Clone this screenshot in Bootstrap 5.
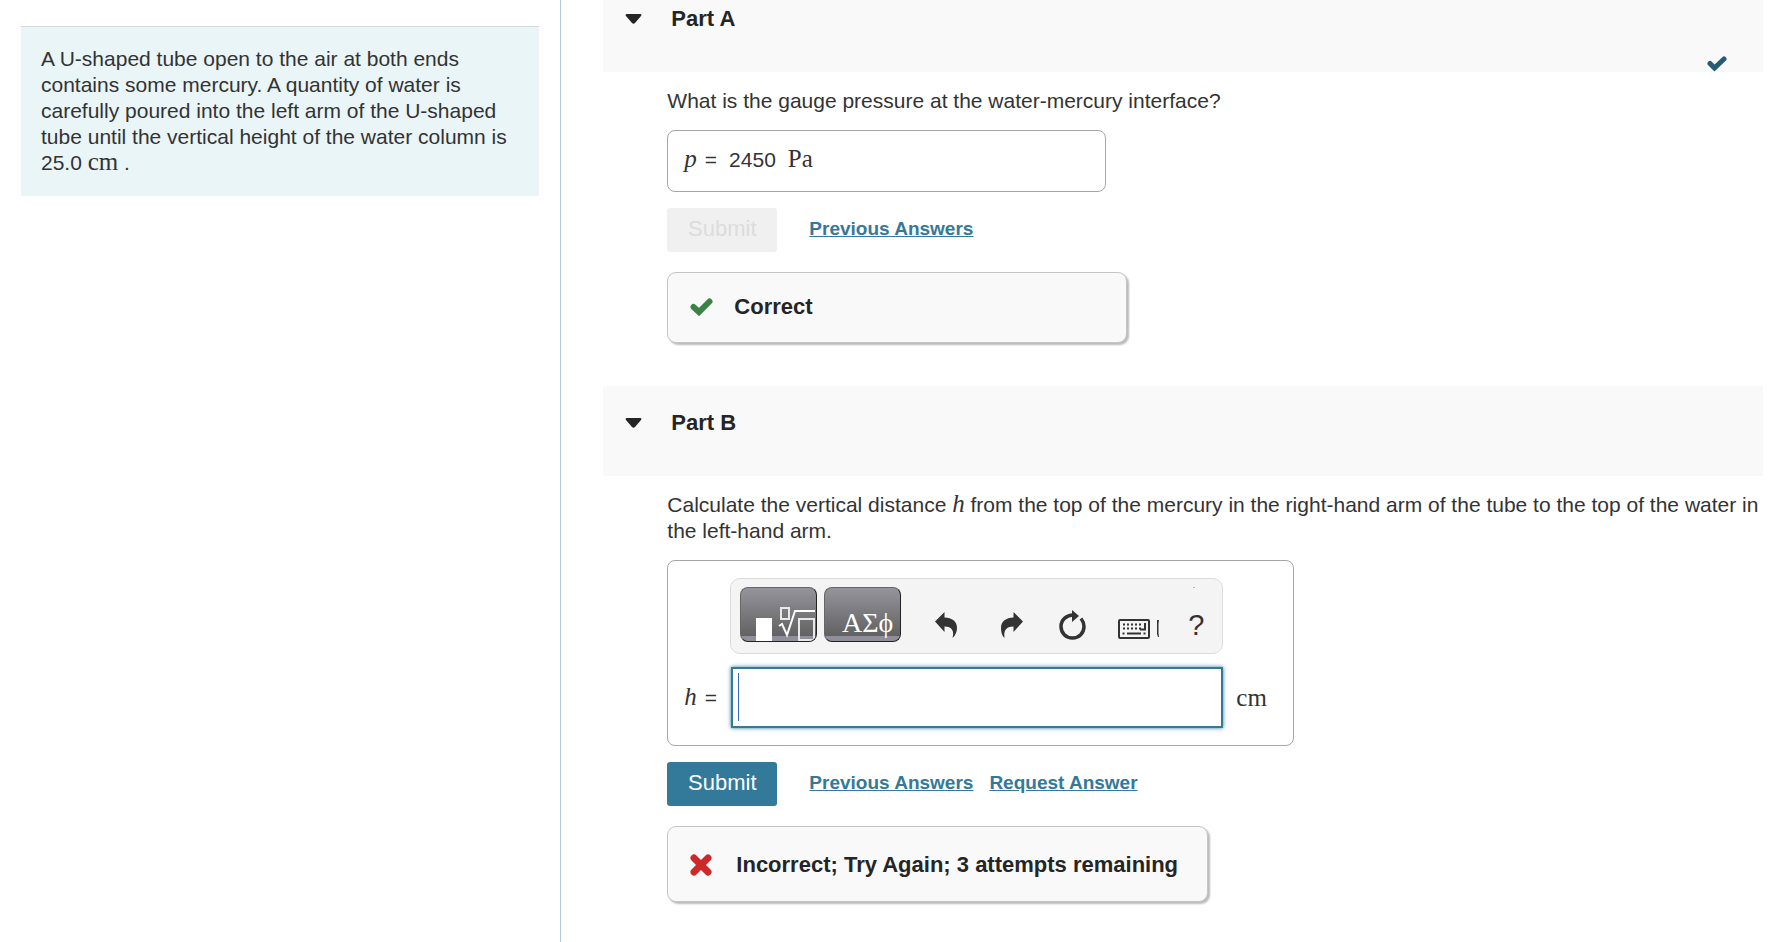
<!DOCTYPE html>
<html lang="en">
<head>
<meta charset="utf-8">
<meta name="viewport" content="width=device-width, initial-scale=1">
<title>Gauge pressure in a U-shaped tube</title>
<link href="https://cdn.jsdelivr.net/npm/bootstrap@5.3.0/dist/css/bootstrap.min.css" rel="stylesheet">
<style>
  :root { --teal: #33799a; --ink: #333; --heading: #252525; --line: #a6a6a6; --soft: #f9f9f9; }
  body { font-family: "Liberation Sans", Arial, sans-serif; font-size: 21px; line-height: 26px; color: var(--ink); background: #fff; }
  .side-pane { flex: 0 0 auto; width: 31.75%; padding: 26px 21px; border-right: 1px solid #b6c8dc; }
  .intro-box { background: #eaf5f8; border-top: 1px solid #d6dadb; padding: 19px 20px 20px; }
  .work-pane { min-width: 0; padding: 0 5px 36px 42px; }
  .math { font-family: "Liberation Serif", serif; font-size: 25px; line-height: 0; }
  .part-head { background: var(--soft); padding: 30px 36px 0 22px; height: 90px; color: var(--heading); }
  .part-head.first { padding-top: 12px; height: 72px; }
  .part-head h2 { font-size: 22px; line-height: 26px; font-weight: 700; margin: 0; }
  .toggle { border: 0; background: none; padding: 0; gap: 29px; line-height: 14px; }
  .done { padding-top: 30px; }
  .part-body { padding: 16px 0 0 64px; }
  .answer { border: 1px solid var(--line); border-radius: 8px; }
  .given { max-width: 439px; height: 62px; padding: 0 16px; }
  .editor { max-width: 627px; padding: 17px 0; display: grid; grid-template-columns: 62px 1fr 73px; row-gap: 13px; align-items: center; }
  .tools { grid-column: 2; height: 76px; padding: 8px 7px 8px 9px; background: #f4f4f4; border: 1px solid #dcdcdc; border-radius: 10px; }
  .tools button { height: 57px; padding: 2px 0 0; border: 0; background: none; color: var(--ink); flex: 0 1 auto; }
  .tools .palette { width: 77px; height: 55px; padding: 0; flex: none; margin-right: 7px; border: 1px solid #666; border-right-color: #222; border-bottom-color: #222; border-radius: 8px; color: #fff; overflow: hidden;
    background: linear-gradient(#95949c, #626262 90%, #918f9b 90%, #918f9b); }
  .greek { font-family: "Liberation Serif", serif; font-size: 28px; line-height: 30px; padding: 16px 7px 0 0; text-align: right; display: block; }
  .tools .w-a { width: 65px; } .w-b { width: 57px; } .w-c { width: 76px; } .w-d { width: 38px; }
  .tools .w-first { margin-left: 6px; }
  .tools .help { position: relative; padding-top: 18px; font-size: 29px; line-height: 32px; }
  .help::before { content: ""; position: absolute; top: 0; left: 16px; width: 2px; height: 1px; background: #bbb; }
  .unit-label { grid-column: 1; }
  .unit { padding-left: 13px; }
  .value-wrap { position: relative; padding: 0 0 0 1px; }
  .value-wrap input { display: block; width: 100%; height: 61px; border: 2px solid var(--teal); border-radius: 0; padding: 0 12px; outline: 0; box-shadow: 0 0 4px var(--teal); }
  .cursor { position: absolute; left: 8px; top: 6px; bottom: 7px; width: 1px; background: #3c66d2; }
  .actions { height: 44px; }
  .btn-submit { width: 110px; height: 44px; border: 0; border-radius: 3px; padding: 0 0 3px; font-size: 22px; line-height: 26px; background: var(--teal); color: #fff; margin-right: 32px; }
  .btn-submit:hover { background: #286580; color: #fff; }
  .btn-submit:disabled { background: #f0f0f0; color: #dcdcdc; opacity: 1; }
  .actions a { font-size: 19px; font-weight: 700; color: var(--teal); padding-bottom: 3px; }
  .feedback { margin-top: 20px; background: var(--soft); border: 1px solid #c4c4c4; border-radius: 9px; box-shadow: 2px 2px 2px #bbb; color: var(--heading); font-size: 22px; font-weight: 700; padding: 0 22px 2px; }
  .feedback.ok { max-width: 460px; height: 71px; gap: 21px; }
  .feedback.bad { max-width: 541px; height: 76px; gap: 24px; padding-top: 2px; padding-bottom: 0; }
  .next-part { margin-top: 43px; }
</style>
</head>
<body>
<div class="d-flex min-vh-100">
  <aside class="side-pane">
    <div class="intro-box">A U-shaped tube open to the air at both ends contains some mercury. A quantity of water is carefully poured into the left arm of the U-shaped tube until the vertical height of the water column is 25.0 <span class="math">cm</span> .</div>
  </aside>

  <main class="work-pane flex-grow-1">
    <section>
      <div class="part-head first">
        <h2><button type="button" class="toggle d-flex align-items-center text-reset fw-bold" aria-expanded="true">
          <svg width="17" height="10" viewBox="0 0 17 10" aria-hidden="true"><path d="M1.500 0H15.500Q17 .5 16 2L10 9Q8.500 10.500 7 9L1 2Q0 .5 1.500 0Z" fill="#252525"/></svg>
          Part A</button></h2>
        <div class="done d-flex justify-content-end">
          <svg class="flex-shrink-0" width="20" height="16" viewBox="0 0 20 16" role="img" aria-label="Complete"><path d="M3 7.500L7.500 12L17 3" fill="none" stroke="#255c73" stroke-width="5" stroke-linecap="round"/></svg>
        </div>
      </div>
      <div class="part-body">
        <p class="mb-3">What is the gauge pressure at the water-mercury interface?</p>
        <div class="answer given d-flex align-items-baseline pt-3">
          <span class="math fst-italic">p</span><span class="ms-2">=</span><span class="ms-2 ps-1">2450</span><span class="math ms-2 ps-1">Pa</span>
        </div>
        <div class="actions d-flex align-items-center mt-3">
          <button type="button" class="btn btn-submit" disabled>Submit</button>
          <a href="#">Previous Answers</a>
        </div>
        <div class="feedback ok d-flex align-items-center" role="status">
          <svg width="23" height="18" viewBox="0 0 23 18" aria-hidden="true"><path d="M3.500 9L9 14L19.500 3.500" fill="none" stroke="#3a8245" stroke-width="6" stroke-linecap="round"/></svg>
          <span>Correct</span>
        </div>
      </div>
    </section>

    <section class="next-part">
      <div class="part-head">
        <h2><button type="button" class="toggle d-flex align-items-center text-reset fw-bold" aria-expanded="true">
          <svg width="17" height="10" viewBox="0 0 17 10" aria-hidden="true"><path d="M1.500 0H15.500Q17 .5 16 2L10 9Q8.500 10.500 7 9L1 2Q0 .5 1.500 0Z" fill="#252525"/></svg>
          Part B</button></h2>
      </div>
      <div class="part-body">
        <p class="mb-3">Calculate the vertical distance <span class="math fst-italic">h</span> from the top of the mercury in the right-hand arm of the tube to the top of the water in the left-hand arm.</p>
        <div class="answer editor">
          <div class="tools d-flex" role="toolbar" aria-label="Equation tools">
            <button type="button" class="palette" aria-label="Templates">
              <svg width="75" height="53" viewBox="0 0 75 53" aria-hidden="true"><path d="M15 30H31V53H15Z" fill="#fff"/><g fill="none" stroke="#e8e8e8" stroke-width="2"><path d="M40 20H48V31H40Z"/><path d="M58 31H73V52H58Z"/></g><path d="M38 38L41 36L46 47L54 23H74" fill="none" stroke="#fff" stroke-width="2"/></svg>
            </button>
            <button type="button" class="palette" aria-label="Greek symbols"><span class="greek">ΑΣϕ</span></button>
            <button type="button" class="w-a w-first" aria-label="Undo"><svg class="mt-3" width="23" height="26" viewBox="0 0 23 26" aria-hidden="true"><path d="M0 9.500L9.500 0V5.500C17 6 22 9 22 16C22 20 20 24 17.500 26C19.500 19 17 14.500 9.500 14.500V20Z" fill="#333"/></svg></button>
            <button type="button" class="w-a" aria-label="Redo"><svg class="mt-3" width="23" height="26" viewBox="0 0 23 26" aria-hidden="true"><path d="M23 9.500L13.500 0V5.500C6 6 1 9 1 16C1 20 2 24 4.500 26C3.500 19 6 14.500 13.500 14.500V20Z" fill="#333"/></svg></button>
            <button type="button" class="w-b" aria-label="Reset"><svg class="mt-3" width="27" height="30" viewBox="0 0 27 30" aria-hidden="true"><path d="M14 5C8 5 2 9.500 2 16.500C2 23 7 28 13.500 28C20 28 25 23 25 16.500C25 13.500 24 11 22 8.500" fill="none" stroke="#333" stroke-width="3.500"/><path d="M13 0L20 6L13 12Z" fill="#333"/></svg></button>
            <button type="button" class="w-c" aria-label="Keyboard shortcuts"><svg class="mt-4" width="42" height="20" viewBox="0 0 42 20" aria-hidden="true"><rect x="1" y="1" width="30" height="18" rx="1" fill="none" stroke="#333" stroke-width="2"/><path d="M5 5.500H24M5 9.500H24" stroke="#333" stroke-width="2" stroke-dasharray="2 2"/><path d="M27 4V10.500H22M9 14.500H23M4.500 14.500H6.500M25.500 14.500H27.500" fill="none" stroke="#333" stroke-width="2"/><path d="M39 1H41L40.500 5V14L41 18H40L39 15Z" fill="#333"/></svg></button>
            <button type="button" class="w-d help" aria-label="Help">?</button>
          </div>
          <label for="height-value" class="unit-label d-flex align-items-baseline ps-3"><span class="math fst-italic">h</span><span class="ms-2">=</span></label>
          <div class="value-wrap"><input id="height-value" type="text" autocomplete="off"><span class="cursor"></span></div>
          <span class="math unit">cm</span>
        </div>
        <div class="actions d-flex align-items-center mt-3">
          <button type="button" class="btn btn-submit">Submit</button>
          <a href="#" class="me-3">Previous Answers</a>
          <a href="#">Request Answer</a>
        </div>
        <div class="feedback bad d-flex align-items-center" role="status">
          <svg width="22" height="22" viewBox="0 0 22 22" aria-hidden="true"><path d="M4 4L18 18M18 4L4 18" stroke="#cc292b" stroke-width="7" stroke-linecap="round"/></svg>
          <span>Incorrect; Try Again; 3 attempts remaining</span>
        </div>
      </div>
    </section>
  </main>
</div>
<script src="https://cdn.jsdelivr.net/npm/bootstrap@5.3.0/dist/js/bootstrap.bundle.min.js"></script>
</body>
</html>
